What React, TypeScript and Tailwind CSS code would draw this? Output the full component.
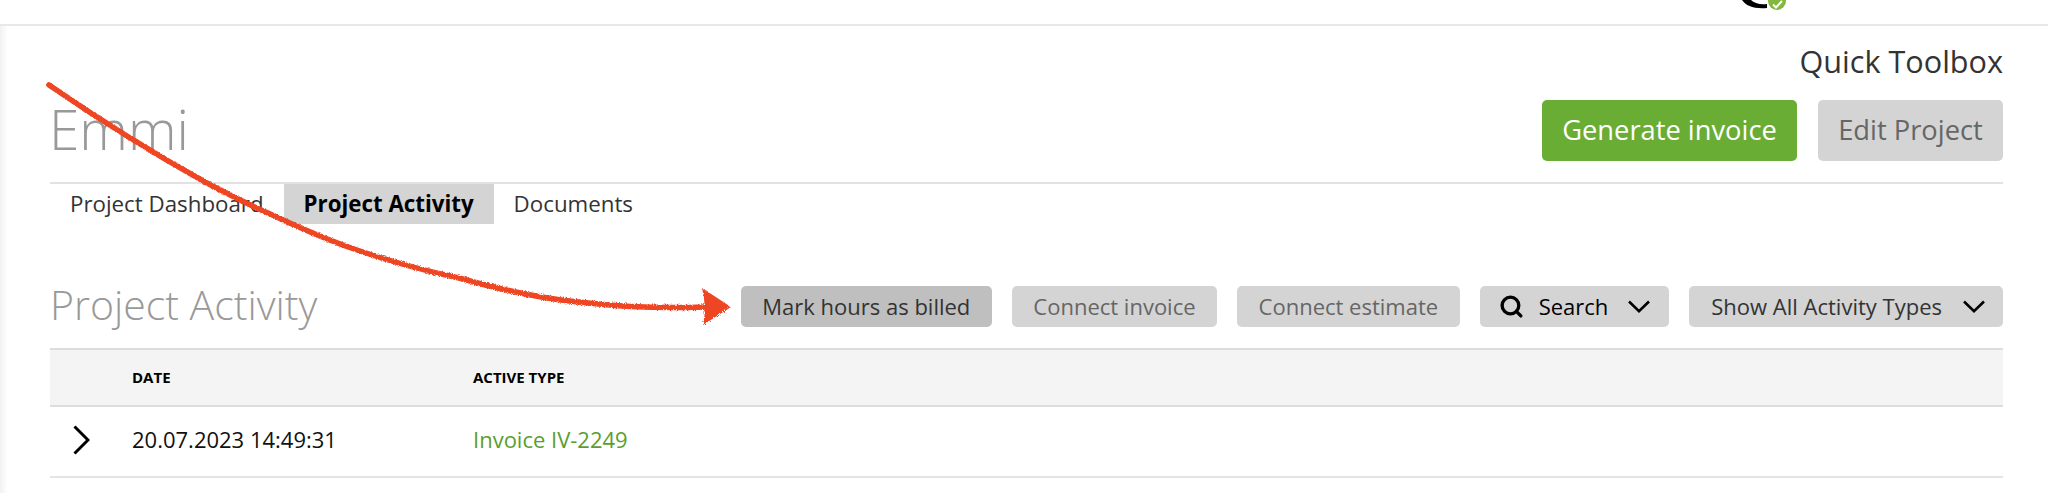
import { Search } from 'lucide-react'

const font = "font-['Open_Sans',sans-serif]"

function ToolButton({ label, muted = false, active = false }: { label: string; muted?: boolean; active?: boolean }) {
    return (
        <button className={`h-[41px] rounded-[5px] px-[21.5px] text-[22px] ${active ? 'bg-[#bfbfbf] text-[#333333]' : 'bg-[#d4d4d4]'} ${muted ? 'text-[#666666]' : ''}`}>
            {label}
        </button>
    )
}

function Caret() {
    return (
        <svg width="22" height="13" viewBox="0 0 22 13" fill="none" stroke="black" strokeWidth="2.6">
            <path d="M1 1.5 L11 11.2 L21 1.5" />
        </svg>
    )
}

function RedArrow() {
    return (
        <svg className="absolute left-0 top-0 pointer-events-none" width="2048" height="493" viewBox="0 0 2048 493" fill="none">
            <defs>
                <filter id="rough" x="-5%" y="-5%" width="110%" height="110%">
                    <feTurbulence type="fractalNoise" baseFrequency="0.9" numOctaves="2" seed="3" />
                    <feDisplacementMap in="SourceGraphic" scale="4" />
                </filter>
            </defs>
            <g filter="url(#rough)">
                <path
                    d="M49 85 C 100 120, 160 157, 205 182 C 226 193, 247 204, 268 213 C 300 228, 330 241, 357 250 C 392 262, 425 271, 459 278 C 495 288, 530 296, 561 300 C 610 306, 650 309, 705 307"
                    stroke="#ee4423"
                    strokeWidth="5.5"
                    strokeLinecap="round"
                />
                <path d="M702 288 L731 307 L703 325 Q707 307 702 288 Z" fill="#ee4423" />
            </g>
        </svg>
    )
}

export default function App() {
    return (
        <div className={`relative w-[2048px] h-[493px] overflow-hidden bg-white ${font}`}>
            {/* Top bar */}
            <div className="relative h-[26px] border-b-2 border-[#e8e8e8]">
                <svg className="absolute left-[1740px] top-0" width="30" height="10" viewBox="0 0 30 10">
                    <path d="M2 0 C 6 6, 14 9, 27 8 L27 4 C 20 5, 14 3, 11 0 Z" fill="black" />
                </svg>
                <div className="absolute left-[1768px] top-[-8px] w-[18px] h-[18px] rounded-full bg-[#82b83e] flex items-center justify-center">
                    <svg className="mt-[6px]" width="11" height="9" viewBox="0 0 11 9" fill="none" stroke="white" strokeWidth="2">
                        <path d="M1 4.5 L4 7.5 L10 1" />
                    </svg>
                </div>
            </div>

            <div className="flex h-[467px]">
                <div className="w-[8px] bg-gradient-to-r from-[#f2f2f2] to-white" />
                <main className="flex-1 pl-[42px] pr-[45px]">
                    {/* Title row */}
                    <div className="flex items-end justify-between h-[158px] pb-[21px] border-b-2 border-[#e2e2e2]">
                        <h1 className="text-[55px] leading-[76px] font-light text-[#999999] mb-[-6px] ml-[-1px]">Emmi</h1>
                        <div className="flex flex-col items-end gap-[18px]">
                            <div className="text-[30.6px] leading-[41px] text-[#333333]">Quick Toolbox</div>
                            <div className="flex gap-[21px]">
                                <button className="h-[61px] w-[255px] rounded-[5px] bg-[#69ad35] text-white text-[27.3px]">Generate invoice</button>
                                <button className="h-[61px] w-[185px] rounded-[5px] bg-[#d4d4d4] text-[#666666] text-[27.3px]">Edit Project</button>
                            </div>
                        </div>
                    </div>

                    {/* Tabs */}
                    <div className="flex text-[22.3px] text-[#333333]">
                        <div className="h-[40px] px-[20px] flex items-center">Project Dashboard</div>
                        <div className="h-[40px] px-[20px] flex items-center bg-[#d4d4d4] font-bold text-black">Project Activity</div>
                        <div className="h-[40px] px-[20px] flex items-center">Documents</div>
                    </div>

                    {/* Activity toolbar */}
                    <div className="flex items-center justify-between mt-[60px]">
                        <h2 className="text-[41px] font-light text-[#999999] leading-[41px] mb-[4px]">Project Activity</h2>
                        <div className="flex gap-[20px] text-[#333333]">
                            <ToolButton label="Mark hours as billed" active />
                            <ToolButton label="Connect invoice" muted />
                            <ToolButton label="Connect estimate" muted />
                            <button className="h-[41px] rounded-[5px] pl-[19px] pr-[19px] bg-[#d4d4d4] text-[22px] text-black flex items-center">
                                <Search className="w-[25px] h-[25px] mr-[15px]" strokeWidth={3.2} />
                                <span className="mr-[20px]">Search</span>
                                <Caret />
                            </button>
                            <button className="h-[41px] rounded-[5px] pl-[22px] pr-[18px] bg-[#d4d4d4] text-[22px] flex items-center">
                                <span className="mr-[21px]">Show All Activity Types</span>
                                <Caret />
                            </button>
                        </div>
                    </div>

                    {/* Table */}
                    <div className="mt-[19px]">
                        <div className="flex items-center h-[59px] bg-[#f4f4f4] border-y-2 border-[#dddddd] text-[15px] font-bold text-black uppercase">
                            <div className="w-[82px]" />
                            <div className="w-[341px]">Date</div>
                            <div>Active Type</div>
                        </div>
                        <div className="flex items-center h-[71px] pb-[4px] border-b-2 border-[#e4e4e4] text-[22px]">
                            <div className="w-[82px] pl-[23px]">
                                <svg className="block" width="17" height="30" viewBox="0 0 17 30" fill="none" stroke="black" strokeWidth="3">
                                    <path d="M1.5 1.5 L15 15 L1.5 28.5" />
                                </svg>
                            </div>
                            <div className="w-[341px] text-[#111111]">20.07.2023 14:49:31</div>
                            <div className="text-[#5a9e2f]">Invoice IV-2249</div>
                        </div>
                    </div>
                </main>
            </div>

            <RedArrow />
        </div>
    )
}
